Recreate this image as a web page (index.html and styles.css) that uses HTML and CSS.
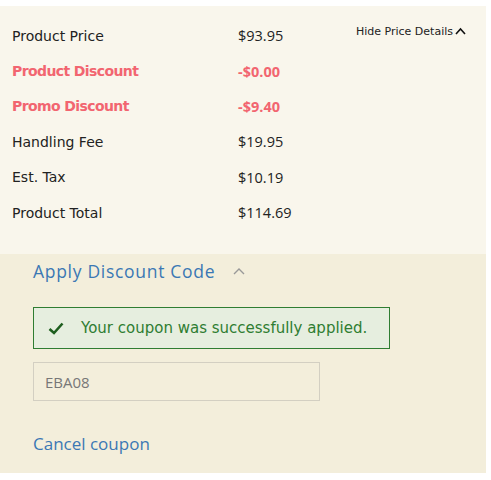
FILE: index.html
```html
<!DOCTYPE html>
<html>
<head>
<meta charset="utf-8">
<link rel="stylesheet" href="styles.css">
</head>
<body>
<div class="panel">
  <section class="summary">
    <div class="rows">
      <div class="row"><span class="label">Product Price</span><span class="value">$93.95</span></div>
      <div class="row red"><span class="label">Product Discount</span><span class="value">-$0.00</span></div>
      <div class="row red"><span class="label">Promo Discount</span><span class="value">-$9.40</span></div>
      <div class="row"><span class="label">Handling Fee</span><span class="value">$19.95</span></div>
      <div class="row"><span class="label">Est. Tax</span><span class="value">$10.19</span></div>
      <div class="row"><span class="label">Product Total</span><span class="value">$114.69</span></div>
    </div>
    <div class="hide">Hide Price Details<svg class="caret" width="11" height="8" viewBox="0 0 11 8"><path d="M1 7 L5.5 2 L10 7" fill="none" stroke="#111" stroke-width="1.6"/></svg></div>
  </section>
  <section class="coupon">
    <div class="apply">Apply Discount Code<svg class="chev" width="12" height="8" viewBox="0 0 12 8"><path d="M1 7 L6 2 L11 7" fill="none" stroke="#999" stroke-width="1.4"/></svg></div>
    <div class="success"><svg class="check" width="16" height="13" viewBox="0 0 16 13"><path d="M1.5 7 L6 11 L14.5 1.5" fill="none" stroke="#1e5e1e" stroke-width="2.6"/></svg><span>Your coupon was successfully applied.</span></div>
    <div class="input">EBA08</div>
    <div class="cancel">Cancel coupon</div>
  </section>
</div>
</body>
</html>
```
FILE: styles.css
```css
html, body { margin: 0; padding: 0; background: #fff; }
body { width: 491px; height: 480px; overflow: hidden; }
.panel { margin-top: 6px; width: 486px; }
.summary {
  background: #f9f6ec;
  height: 248px;
  display: flex;
  justify-content: space-between;
  font-family: "DejaVu Sans", sans-serif;
}
.rows { padding-top: 12px; padding-left: 12px; }
.row { display: flex; height: 35.4px; align-items: center; font-size: 14px; color: #222; }
.row .label { width: 226px; }
.row .value { font-family: "Open Sans", sans-serif; font-size: 14.5px; }
.row.red { color: #f26570; font-weight: bold; }
.row.red .label { font-size: 14px; letter-spacing: -0.6px; }
.row.red .value { font-size: 14.5px; }
.hide { padding-top: 19px; padding-right: 20px; font-size: 11px; color: #222; display: flex; align-items: flex-start; }
.caret { margin-left: 2px; margin-top: 2px; }
.coupon {
  background: #f3eedb;
  height: 219px;
  padding-left: 33px;
  box-sizing: border-box;
  font-family: "Open Sans", sans-serif;
}
.apply { padding-top: 5px; font-size: 17.5px; letter-spacing: 0.7px; color: #3b78b4; display: flex; align-items: center; height: 24px; }
.chev { margin-left: 18px; }
.success {
  margin-top: 24px;
  width: 357px; height: 42px; box-sizing: border-box;
  border: 1px solid #2f7d32; background: #e6eedf;
  display: flex; align-items: center; padding-left: 14px;
  font-family: "DejaVu Sans", sans-serif; font-size: 15px; color: #2f7d32;
}
.check { margin-right: 17px; }
.input {
  margin-top: 13px;
  width: 287px; height: 39px; box-sizing: border-box;
  border: 1px solid #d3cfc2;
  padding-left: 11px; display: flex; align-items: center;
  font-size: 15px; color: #777;
}
.cancel { margin-top: 31px; font-size: 17px; color: #3b78b4; }
```
